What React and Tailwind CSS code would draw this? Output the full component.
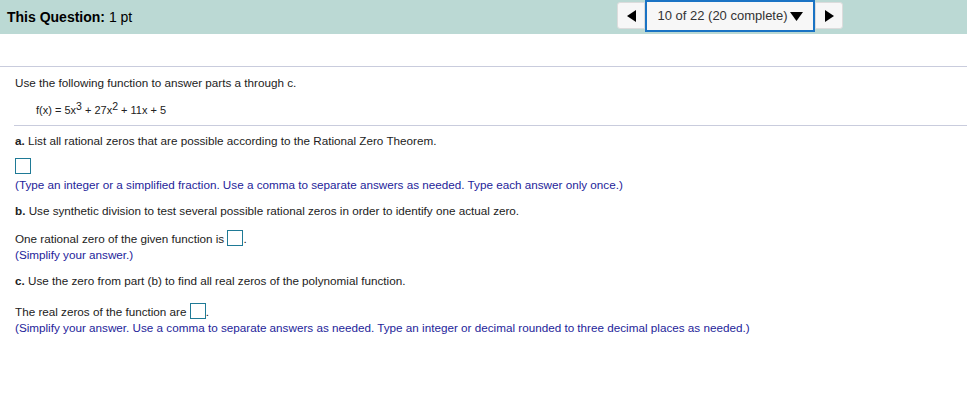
import React from 'react';

const Box = ({ className = '' }) => (
    <span className={`inline-block w-[16px] h-[16px] border border-[#1f7a96] bg-white align-middle ${className}`}></span>
);

const App = () => {
    return (
        <div className="w-[967px] h-[412px] bg-white font-['Liberation_Sans',Arial,sans-serif] text-[11.7px] text-[#222] overflow-hidden">
            {/* Header bar */}
            <div className="h-[34px] bg-[#bbd9d4] flex items-start justify-between">
                <div className="pl-[7px] pt-[7px] text-[14px] text-black">
                    <span className="font-bold">This Question:</span> 1 pt
                </div>
                <div className="flex items-start mr-[124px]">
                    <button className="mt-[2px] w-[28px] h-[27px] bg-[#f7f7f7] border border-[#dcdcdc] rounded-l-[3px] flex items-center justify-center">
                        <svg width="9" height="12" viewBox="0 0 9 12"><path d="M9 0 L0 6 L9 12 Z" fill="#000" /></svg>
                    </button>
                    <button className="w-[170px] h-[32px] bg-[#f7f7f7] border-2 border-[#1a73c4] flex items-center justify-center gap-[2px] text-[13px] text-[#333]">
                        <span>10 of 22 (20 complete)</span>
                        <svg width="13" height="9" viewBox="0 0 13 9"><path d="M0 0 L13 0 L6.5 9 Z" fill="#000" /></svg>
                    </button>
                    <button className="mt-[2px] w-[28px] h-[27px] bg-[#f7f7f7] border border-[#dcdcdc] rounded-r-[3px] flex items-center justify-center">
                        <svg width="9" height="12" viewBox="0 0 9 12"><path d="M0 0 L9 6 L0 12 Z" fill="#000" /></svg>
                    </button>
                </div>
            </div>

            <div className="h-[33px] border-b border-[#c9ccdd]"></div>

            <div className="px-[15px]">
                <p className="mt-[8px] leading-[15px]">Use the following function to answer parts a through c.</p>
                <p className="mt-[13px] ml-[21px] leading-[15px] text-[11px]">
                    f(x) = 5x<sup className="text-[10.5px] -top-[0.35em]">3</sup> + 27x<sup className="text-[10.5px] -top-[0.35em]">2</sup> + 11x + 5
                </p>
            </div>
            <div className="mt-[7px] ml-[14px] border-b border-[#c9ccdd]"></div>

            <div className="px-[15px]">
                <p className="mt-[7px] leading-[15px]"><span className="font-bold">a.</span> List all rational zeros that are possible according to the Rational Zero Theorem.</p>
                <div className="mt-[10px] h-[16px]"><Box className="align-top" /></div>
                <p className="mt-[3px] leading-[15px] text-[#24249a]">(Type an integer or a simplified fraction. Use a comma to separate answers as needed. Type each answer only once.)</p>
                <p className="mt-[11px] leading-[15px]"><span className="font-bold">b.</span> Use synthetic division to test several possible rational zeros in order to identify one actual zero.</p>
                <p className="mt-[13px] leading-[16px]">One rational zero of the given function is <Box className="-mt-[3px]" />.</p>
                <p className="leading-[15px] text-[#24249a]">(Simplify your answer.)</p>
                <p className="mt-[11px] leading-[15px]"><span className="font-bold">c.</span> Use the zero from part (b) to find all real zeros of the polynomial function.</p>
                <p className="mt-[16px] leading-[16px]">The real zeros of the function are <Box className="-mt-[3px]" />.</p>
                <p className="leading-[15px] text-[#24249a]">(Simplify your answer. Use a comma to separate answers as needed. Type an integer or decimal rounded to three decimal places as needed.)</p>
            </div>
        </div>
    );
};

export default App;
